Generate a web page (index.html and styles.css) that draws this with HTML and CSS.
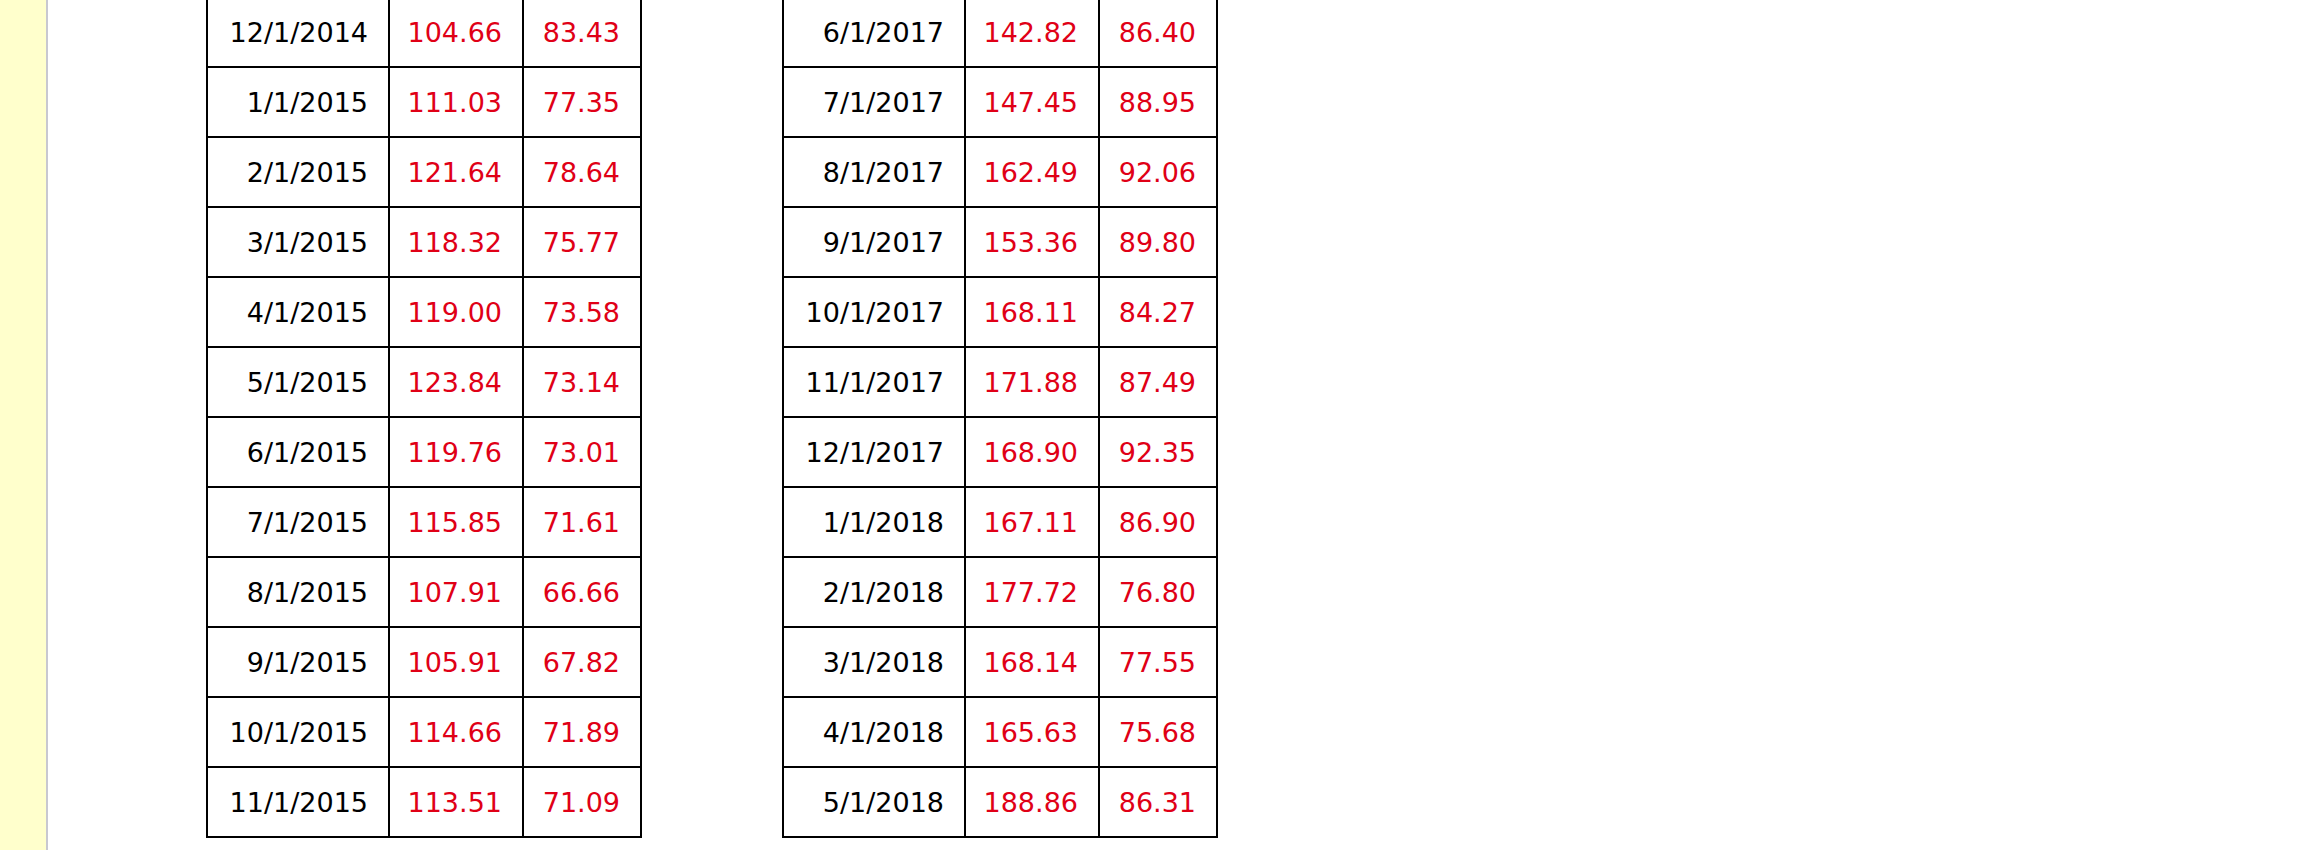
FILE: index.html
```html
<!DOCTYPE html>
<html lang="en">
<head>
<meta charset="utf-8">
<title>Price table</title>
<link rel="stylesheet" href="styles.css">
</head>
<body>
<div class="page">
  <aside class="sidebar"></aside>
  <main class="content">
    <table class="prices">
      <colgroup><col class="c-date"><col class="c-a"><col class="c-b"></colgroup>
      <tbody>
        <tr><td class="date">12/1/2014</td><td class="num">104.66</td><td class="num">83.43</td></tr>
        <tr><td class="date">1/1/2015</td><td class="num">111.03</td><td class="num">77.35</td></tr>
        <tr><td class="date">2/1/2015</td><td class="num">121.64</td><td class="num">78.64</td></tr>
        <tr><td class="date">3/1/2015</td><td class="num">118.32</td><td class="num">75.77</td></tr>
        <tr><td class="date">4/1/2015</td><td class="num">119.00</td><td class="num">73.58</td></tr>
        <tr><td class="date">5/1/2015</td><td class="num">123.84</td><td class="num">73.14</td></tr>
        <tr><td class="date">6/1/2015</td><td class="num">119.76</td><td class="num">73.01</td></tr>
        <tr><td class="date">7/1/2015</td><td class="num">115.85</td><td class="num">71.61</td></tr>
        <tr><td class="date">8/1/2015</td><td class="num">107.91</td><td class="num">66.66</td></tr>
        <tr><td class="date">9/1/2015</td><td class="num">105.91</td><td class="num">67.82</td></tr>
        <tr><td class="date">10/1/2015</td><td class="num">114.66</td><td class="num">71.89</td></tr>
        <tr><td class="date">11/1/2015</td><td class="num">113.51</td><td class="num">71.09</td></tr>
      </tbody>
    </table>
    <table class="prices">
      <colgroup><col class="c-date"><col class="c-a"><col class="c-b"></colgroup>
      <tbody>
        <tr><td class="date">6/1/2017</td><td class="num">142.82</td><td class="num">86.40</td></tr>
        <tr><td class="date">7/1/2017</td><td class="num">147.45</td><td class="num">88.95</td></tr>
        <tr><td class="date">8/1/2017</td><td class="num">162.49</td><td class="num">92.06</td></tr>
        <tr><td class="date">9/1/2017</td><td class="num">153.36</td><td class="num">89.80</td></tr>
        <tr><td class="date">10/1/2017</td><td class="num">168.11</td><td class="num">84.27</td></tr>
        <tr><td class="date">11/1/2017</td><td class="num">171.88</td><td class="num">87.49</td></tr>
        <tr><td class="date">12/1/2017</td><td class="num">168.90</td><td class="num">92.35</td></tr>
        <tr><td class="date">1/1/2018</td><td class="num">167.11</td><td class="num">86.90</td></tr>
        <tr><td class="date">2/1/2018</td><td class="num">177.72</td><td class="num">76.80</td></tr>
        <tr><td class="date">3/1/2018</td><td class="num">168.14</td><td class="num">77.55</td></tr>
        <tr><td class="date">4/1/2018</td><td class="num">165.63</td><td class="num">75.68</td></tr>
        <tr><td class="date">5/1/2018</td><td class="num">188.86</td><td class="num">86.31</td></tr>
      </tbody>
    </table>
  </main>
</div>
</body>
</html>
```

FILE: styles.css
```css
html, body {
  margin: 0;
  padding: 0;
  background: #ffffff;
  height: 100%;
  overflow: hidden;
}

.page {
  display: flex;
  min-height: 100vh;
  font-family: "DejaVu Sans", Verdana, sans-serif;
  font-size: 27px;
  color: #000000;
}

.sidebar {
  flex: 0 0 46px;
  background: #ffffcc;
  border-right: 2px solid #c8c8d0;
}

.content {
  flex: 1;
  display: flex;
  align-items: flex-start;
  gap: 140px;
  padding-left: 158px;
  margin-top: -4px;
}

.prices {
  border-collapse: collapse;
  table-layout: fixed;
  border: 2px solid #000000;
}

.prices .c-date { width: 182px; }
.prices .c-a { width: 134px; }
.prices .c-b { width: 118px; }

.prices td {
  border: 2px solid #000000;
  height: 68px;
  padding: 0 20px 0 0;
  text-align: right;
  vertical-align: middle;
  white-space: nowrap;
  line-height: 1;
}

.prices td.num {
  color: #e00016;
  padding-right: 20px;
}
```
